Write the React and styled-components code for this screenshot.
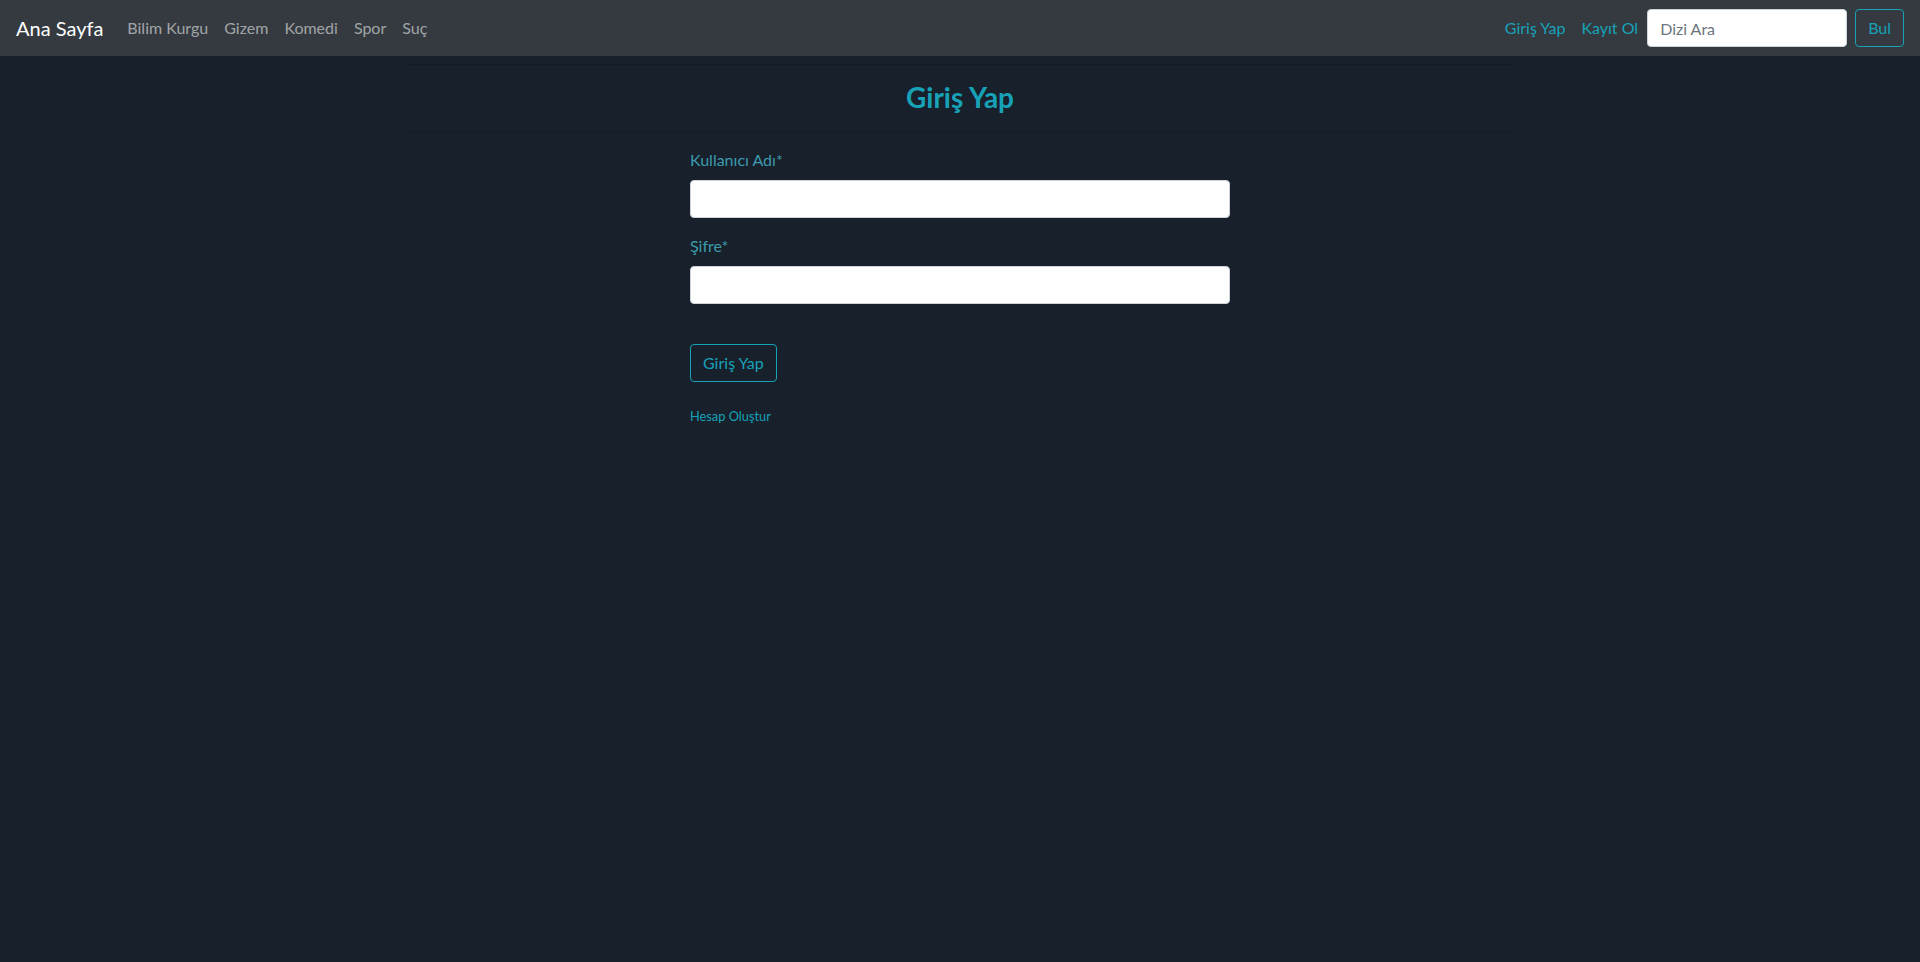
import React, { useState } from "react";
import styled, { createGlobalStyle } from "styled-components";

const colors = {
  page: "#17202b",
  nav: "#343a40",
  info: "#17a2b8",
  label: "#3e9bad",
  muted: "rgba(255, 255, 255, 0.55)",
  line: "rgba(0, 0, 0, 0.1)",
};

const font = `Lato, "Open Sans", "Liberation Sans", sans-serif`;

const GlobalStyle = createGlobalStyle`
  * {
    box-sizing: border-box;
  }
  html, body {
    margin: 0;
    min-height: 100%;
  }
  body {
    background-color: ${colors.page};
    font-family: ${font};
    font-size: 16px;
    line-height: 1.5;
    min-height: 962px;
  }
`;

const Navbar = styled.nav`
  display: flex;
  align-items: center;
  height: 56px;
  padding: 8px 16px;
  background-color: ${colors.nav};
`;

const Brand = styled.a`
  color: #fff;
  font-size: 20px;
  line-height: 30px;
  margin-right: 16px;
  text-decoration: none;
  cursor: pointer;
`;

const NavList = styled.div`
  display: flex;
  align-items: center;
`;

const NavLink = styled.a`
  display: block;
  padding: 8px;
  line-height: 24px;
  color: ${(p) => (p.$info ? colors.info : colors.muted)};
  text-decoration: none;
  cursor: pointer;
  &:hover {
    color: ${(p) => (p.$info ? "#0f6674" : "rgba(255,255,255,.75)")};
  }
`;

const RightSide = styled.div`
  display: flex;
  align-items: center;
  margin-left: auto;
`;

const SearchForm = styled.form`
  display: flex;
  align-items: center;
  margin-left: 1px;
`;

const SearchInput = styled.input`
  width: 200px;
  height: 38px;
  margin-right: 8px;
  padding: 6px 12px;
  font-family: ${font};
  font-size: 16px;
  color: #495057;
  background: #fff;
  border: 1px solid #ced4da;
  border-radius: 4px;
  &::placeholder {
    color: #6c757d;
  }
  &:focus {
    outline: none;
  }
`;

const OutlineButton = styled.button`
  height: 38px;
  padding: 6px 12px;
  font-family: ${font};
  font-size: 16px;
  line-height: 24px;
  color: ${colors.info};
  background: transparent;
  border: 1px solid ${colors.info};
  border-radius: 4px;
  cursor: pointer;
  &:hover {
    color: #fff;
    background: ${colors.info};
  }
`;

const Container = styled.main`
  width: 1140px;
  margin: 0 auto;
  padding: 8px 15px 0;
`;

const Divider = styled.hr`
  margin: 0;
  border: 0;
  border-top: 1px solid ${colors.line};
`;

const Title = styled.h3`
  margin: 16px 0;
  text-align: center;
  font-size: 28px;
  line-height: 1.2;
  font-weight: 700;
  color: ${colors.info};
`;

const FormColumn = styled.form`
  width: 540px;
  margin: 16px auto 0;
`;

const FieldGroup = styled.div`
  margin-bottom: 16px;
`;

const Label = styled.label`
  display: block;
  margin-bottom: 8px;
  line-height: 24px;
  color: ${colors.label};
`;

const TextInput = styled.input`
  display: block;
  width: 100%;
  height: 38px;
  padding: 6px 12px;
  font-family: ${font};
  font-size: 16px;
  color: #495057;
  background: #fff;
  border: 1px solid #ced4da;
  border-radius: 4px;
  &:focus {
    outline: none;
  }
`;

const SubmitRow = styled.div`
  padding-top: 24px;
`;

const SmallLink = styled.a`
  display: inline-block;
  margin-top: 25px;
  font-size: 12.8px;
  line-height: 19px;
  color: ${colors.info};
  text-decoration: none;
  cursor: pointer;
  &:hover {
    text-decoration: underline;
  }
`;

const genres = ["Bilim Kurgu", "Gizem", "Komedi", "Spor", "Suç"];

function App() {
  const [loginInfo, setLoginInfo] = useState({ username: "", password: "" });
  const [search, setSearch] = useState("");

  const handleInputValue = (key) => (e) => {
    setLoginInfo({ ...loginInfo, [key]: e.target.value });
  };

  return (
    <>
      <GlobalStyle />
      <Navbar>
        <Brand>Ana Sayfa</Brand>
        <NavList>
          {genres.map((g) => (
            <NavLink key={g}>{g}</NavLink>
          ))}
        </NavList>
        <RightSide>
          <NavLink $info>Giriş Yap</NavLink>
          <NavLink $info>Kayıt Ol</NavLink>
          <SearchForm onSubmit={(e) => e.preventDefault()}>
            <SearchInput
              placeholder="Dizi Ara"
              value={search}
              onChange={(e) => setSearch(e.target.value)}
            />
            <OutlineButton type="submit">Bul</OutlineButton>
          </SearchForm>
        </RightSide>
      </Navbar>
      <Container>
        <Divider />
        <Title>Giriş Yap</Title>
        <Divider />
        <FormColumn onSubmit={(e) => e.preventDefault()}>
          <FieldGroup>
            <Label>Kullanıcı Adı*</Label>
            <TextInput
              value={loginInfo.username}
              onChange={handleInputValue("username")}
            />
          </FieldGroup>
          <FieldGroup>
            <Label>Şifre*</Label>
            <TextInput
              type="password"
              value={loginInfo.password}
              onChange={handleInputValue("password")}
            />
          </FieldGroup>
          <SubmitRow>
            <OutlineButton type="submit">Giriş Yap</OutlineButton>
          </SubmitRow>
          <SmallLink>Hesap Oluştur</SmallLink>
        </FormColumn>
      </Container>
    </>
  );
}

export default App;
